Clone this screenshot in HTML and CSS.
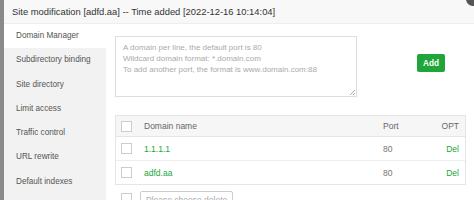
FILE: index.html
```html
<!DOCTYPE html>
<html>
<head>
<meta charset="utf-8">
<link rel="stylesheet" href="styles.css">
</head>
<body>
<div class="page">
  <div class="backdrop"></div>
  <div class="dialog">
    <div class="title">Site modification [adfd.aa] -- Time added [2022-12-16 10:14:04]</div>
    <div class="close"></div>
    <div class="body">
      <div class="side">
        <div class="item active">Domain Manager</div>
        <div class="item">Subdirectory binding</div>
        <div class="item">Site directory</div>
        <div class="item">Limit access</div>
        <div class="item">Traffic control</div>
        <div class="item">URL rewrite</div>
        <div class="item">Default indexes</div>
      </div>
      <div class="main">
        <div class="addrow">
          <div class="ta">A domain per line, the default port is 80<br>Wildcard domain format: *.domain.com<br>To add another port, the format is www.domain.com:88<span class="grip"></span></div>
          <button class="add">Add</button>
        </div>
        <div class="table">
          <div class="tr head">
            <span class="cb"></span><span class="name">Domain name</span><span class="port">Port</span><span class="opt">OPT</span>
          </div>
          <div class="tr">
            <span class="cb"></span><span class="name green">1.1.1.1</span><span class="port">80</span><span class="opt green">Del</span>
          </div>
          <div class="tr last">
            <span class="cb"></span><span class="name green">adfd.aa</span><span class="port">80</span><span class="opt green">Del</span>
          </div>
        </div>
        <div class="foot">
          <span class="cb"></span><span class="btn">Please choose delete</span>
        </div>
      </div>
    </div>
  </div>
</div>
</body>
</html>
```
FILE: styles.css
```css
html, body { margin: 0; padding: 0; }
body { width: 474px; height: 200px; overflow: hidden; font-family: "Liberation Sans", Arial, sans-serif; background: #fff; }
.page { display: flex; height: 200px; }
.backdrop { width: 4px; background: #8a8a8a; flex: none; }
.dialog { flex: 1; position: relative; display: flex; flex-direction: column; background: #fff; min-width: 0; }
.title { height: 24px; line-height: 23px; box-sizing: border-box; padding-left: 8px; font-size: 9.4px; color: #333; background: #f8f8f8; border-bottom: 1px solid #eee; white-space: nowrap; }
.close { position: absolute; right: -6px; top: -8px; width: 14px; height: 14px; border-radius: 50%; background: #555; }
.body { flex: 1; display: flex; min-height: 0; }
.side { width: 102px; background: #f2f2f2; flex: none; }
.item { height: 24.3px; line-height: 24px; font-size: 8.2px; color: #555; padding-left: 12px; white-space: nowrap; }
.item.active { background: #fff; }
.main { flex: 1; padding: 12px 8px 0 9px; }
.addrow { display: flex; align-items: flex-start; }
.ta { position: relative; width: 242px; height: 61px; box-sizing: border-box; border: 1px solid #ddd; padding: 5px 7px; font-size: 8px; line-height: 11px; color: #aaa; white-space: nowrap; }
.grip { position: absolute; right: 1px; bottom: 1px; width: 5px; height: 5px; background: linear-gradient(135deg, transparent 45%, #aaa 45%, #aaa 55%, transparent 55%, transparent 75%, #aaa 75%, #aaa 85%, transparent 85%); }
.add { margin: 18px 0 0 60px; width: 28px; height: 18px; padding: 0; border: 0; border-radius: 2px; background: #20a53a; color: #fff; font-family: inherit; font-size: 8.2px; font-weight: bold; }
.table { margin-top: 18px; width: 351px; border: 1px solid #e5e5e5; box-sizing: border-box; }
.tr { display: flex; align-items: center; height: 23px; border-bottom: 1px solid #eee; font-size: 8.5px; color: #777; }
.tr.last { border-bottom: 0; }
.tr.head { height: 20px; background: #f6f6f6; border-bottom: 1px solid #e5e5e5; color: #666; }
.cb { width: 9px; height: 9px; border: 1px solid #ccc; background: #fff; margin-left: 5px; flex: none; }
.name { margin-left: 12px; flex: 1; }
.port { width: 50px; }
.opt { width: 26px; text-align: right; padding-right: 6px; }
.green { color: #20a53a; }
.tr.head .opt { color: #666; }
.foot { display: flex; align-items: flex-start; margin-top: 6px; }
.foot .cb { margin-left: 6px; margin-top: 2px; }
.btn { margin-left: 8px; border: 1px solid #ccc; border-radius: 2px; padding: 0 5px; font-size: 8.5px; color: #aaa; height: 16px; line-height: 16px; }
```
